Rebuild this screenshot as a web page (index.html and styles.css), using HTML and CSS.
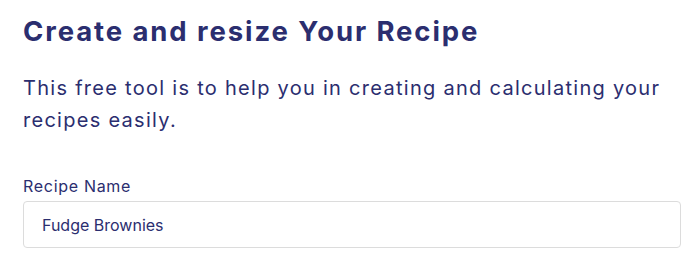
FILE: index.html
```html
<!DOCTYPE html>
<html lang="en">
<head>
<meta charset="utf-8">
<link rel="stylesheet" href="styles.css">
</head>
<body>
<main class="page">
  <h1 class="title">Create and resize Your Recipe</h1>
  <p class="intro">This free tool is to help you in creating and calculating your recipes easily.</p>
  <div class="field">
    <label class="label" for="recipe-name">Recipe Name</label>
    <input class="input" id="recipe-name" type="text" value="Fudge Brownies">
  </div>
</main>
</body>
</html>
```
FILE: styles.css
```css
* { box-sizing: border-box; }
html, body { margin: 0; padding: 0; background: #fff; }
body { font-family: Inter, "Noto Sans", sans-serif; color: #2b2e6f; }
.page {
  width: 658px;
  margin-left: 23px;
  padding-top: 14px;
  display: flex;
  flex-direction: column;
}
.title {
  margin: 0;
  font-size: 27.5px;
  line-height: 34px;
  font-weight: 700;
  letter-spacing: 1.9px;
  color: #2b2e6f;
}
.intro {
  margin: 24px 0 0;
  font-size: 20px;
  line-height: 32px;
  font-weight: 400;
  letter-spacing: 1.28px;
  color: #2b2e6f;
}
.field {
  margin-top: 41px;
  display: flex;
  flex-direction: column;
  gap: 6px;
}
.label {
  font-size: 16px;
  line-height: 18px;
  letter-spacing: 0.7px;
  color: #2b2e6f;
}
.input {
  height: 47px;
  width: 100%;
  border: 1px solid #dcdcdc;
  border-radius: 4px;
  padding: 0 18px;
  font-family: inherit;
  font-size: 16px;
  color: #2b2e6f;
  background: #fff;
  outline: none;
}
```
